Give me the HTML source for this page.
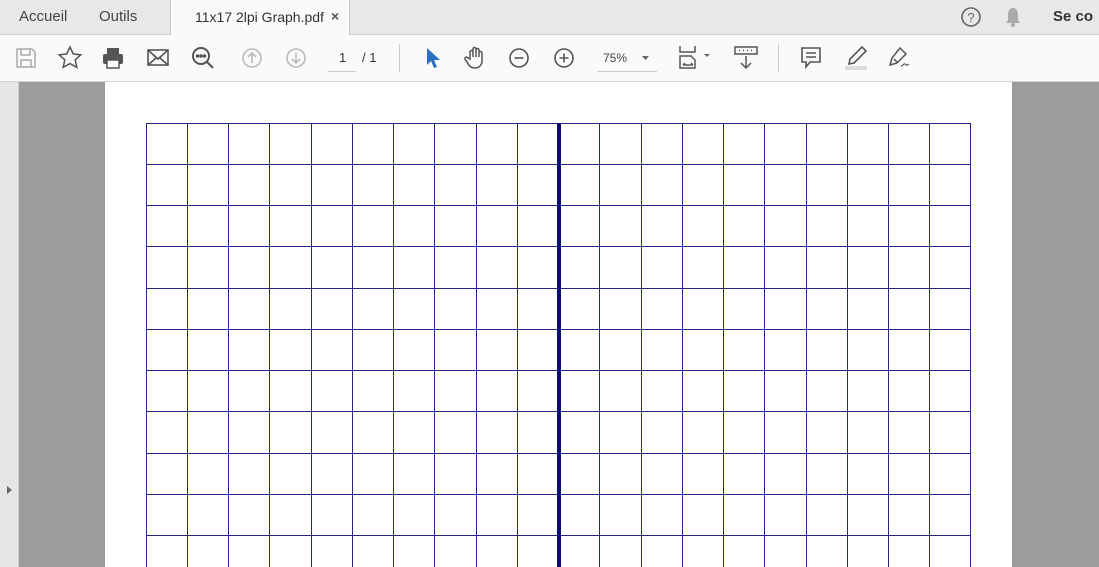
<!DOCTYPE html>
<html><head><meta charset="utf-8"><style>
*{margin:0;padding:0;box-sizing:border-box}
body{width:1099px;height:567px;overflow:hidden;background:#fff;font-family:"Liberation Sans",sans-serif;position:relative}
.tabs{position:absolute;left:0;top:0;width:1099px;height:35px;background:#e8e8e8;border-bottom:1px solid #d0d0d0}
.t{position:absolute;top:8px;font-size:15px;color:#444}
.active{position:absolute;left:170px;top:0;width:180px;height:35px;background:#fafafa;border-left:1px solid #ccc;border-right:1px solid #ccc}
.tb{position:absolute;left:0;top:35px;width:1099px;height:47px;background:#fafafa;border-bottom:1px solid #d4d4d4}
.ic{position:absolute}
</style></head><body>
<div class="tabs">
<span class="t" style="left:19px">Accueil</span>
<span class="t" style="left:99px">Outils</span>
<div class="active"></div>
<span class="t" style="left:195px;color:#333;font-size:14px;top:9px">11x17 2lpi Graph.pdf</span>
<span class="t" style="left:331px;top:8px;font-size:14px;color:#555;font-weight:bold">×</span>
<svg class="ic" style="left:960px;top:6px" width="22" height="22"><circle cx="11" cy="11" r="9" fill="none" stroke="#666" stroke-width="1.6"/><text x="11" y="16" font-size="13" text-anchor="middle" fill="#666" font-family="Liberation Sans">?</text></svg>
<svg class="ic" style="left:1003px;top:6px" width="20" height="22"><path d="M10 2c-4 0-5 4-5 8v4l-2 3h14l-2-3v-4c0-4-1-8-5-8z" fill="#aaa"/><circle cx="10" cy="19" r="2" fill="#aaa"/></svg>
<span class="t" style="left:1053px;font-weight:bold;color:#333">Se co</span>
</div>
<div class="tb">
<svg class="ic" style="left:14px;top:11px" width="24" height="24" fill="none" stroke="#aaa" stroke-width="1.5"><path d="M3 3h15l3 3v15H3z"/><path d="M7 3v6h9V3M7 21v-7h10v7"/></svg>
<svg class="ic" style="left:57px;top:10px" width="26" height="26" fill="none" stroke="#555" stroke-width="1.5"><path d="M13 2l3.3 7 7.5.8-5.6 5 1.6 7.5L13 18.6 6.2 22.3l1.6-7.5-5.6-5 7.5-.8z"/></svg>
<svg class="ic" style="left:101px;top:11px" width="24" height="24"><rect x="6" y="2" width="12" height="6" fill="#555"/><rect x="2" y="8" width="20" height="10" rx="2" fill="#555"/><rect x="6" y="14" width="12" height="8" fill="#fff" stroke="#555" stroke-width="1.5"/></svg>
<svg class="ic" style="left:146px;top:12px" width="24" height="22" fill="none" stroke="#555" stroke-width="1.6"><rect x="2" y="3" width="20" height="15"/><path d="M2 3l10 9 10-9M2 18l8-7M22 18l-8-7"/></svg>
<svg class="ic" style="left:190px;top:10px" width="26" height="26" fill="none" stroke="#555" stroke-width="2"><circle cx="11" cy="11" r="8"/><path d="M17 17l6 6"/><circle cx="7.5" cy="11" r=".8" fill="#555"/><circle cx="11" cy="11" r=".8" fill="#555"/><circle cx="14.5" cy="11" r=".8" fill="#555"/></svg>
<svg class="ic" style="left:241px;top:12px" width="22" height="22" fill="none" stroke="#bbb" stroke-width="1.6"><circle cx="11" cy="11" r="9"/><path d="M11 16V6M7 10l4-4 4 4"/></svg>
<svg class="ic" style="left:285px;top:12px" width="22" height="22" fill="none" stroke="#bbb" stroke-width="1.6"><circle cx="11" cy="11" r="9"/><path d="M11 6v10M7 12l4 4 4-4"/></svg>
<span class="t" style="left:339px;top:15px;font-size:13px;color:#333">1</span>
<div class="ic" style="left:328px;top:36px;width:28px;height:1px;background:#ccc"></div>
<span class="t" style="left:362px;top:15px;font-size:13px;color:#333">/ 1</span>
<div class="ic" style="left:399px;top:9px;width:1px;height:28px;background:#ccc"></div>
<svg class="ic" style="left:424px;top:11px" width="18" height="24"><path d="M3 2v17l4-4 3 7 3-1-3-7h6z" fill="#2d6fc4"/></svg>
<svg class="ic" style="left:463px;top:10px" width="26" height="26" fill="none" stroke="#555" stroke-width="1.5"><path d="M7 14V7a1.5 1.5 0 013 0v5V4a1.5 1.5 0 013 0v8V5a1.5 1.5 0 013 0v7V8a1.5 1.5 0 013 0v8c0 4-3 7-7 7s-6-2-8-6l-2-3a1.5 1.5 0 012.5-1.5z"/></svg>
<svg class="ic" style="left:508px;top:12px" width="22" height="22" fill="none" stroke="#555" stroke-width="1.6"><circle cx="11" cy="11" r="9"/><path d="M6.5 11h9"/></svg>
<svg class="ic" style="left:553px;top:12px" width="22" height="22" fill="none" stroke="#555" stroke-width="1.6"><circle cx="11" cy="11" r="9"/><path d="M6.5 11h9M11 6.5v9"/></svg>
<span class="t" style="left:603px;top:16px;font-size:12px;color:#444">75%</span>
<svg class="ic" style="left:641px;top:20px" width="10" height="6"><path d="M1 1h7l-3.5 4z" fill="#666"/></svg>
<div class="ic" style="left:597px;top:36px;width:60px;height:1px;background:#ccc"></div>
<svg class="ic" style="left:678px;top:9px" width="36" height="28" fill="none" stroke="#555" stroke-width="1.5"><path d="M2 2v6h15V2M2 24V12h11l4 4v8z"/><path d="M5 21h10M5 21l2-2M15 21l-2-2"/><path d="M26 10h6l-3 3z" fill="#666" stroke="none"/></svg>
<svg class="ic" style="left:733px;top:10px" width="26" height="26" fill="none" stroke="#555" stroke-width="1.5"><rect x="2" y="2" width="22" height="7"/><path d="M6 5.5h1M10 5.5h1M14 5.5h1M18 5.5h1M13 11v12M8 18l5 5 5-5"/></svg>
<div class="ic" style="left:778px;top:9px;width:1px;height:28px;background:#ccc"></div>
<svg class="ic" style="left:799px;top:10px" width="24" height="26" fill="none" stroke="#555" stroke-width="1.6"><path d="M3 3h18v14H11l-4 5v-5H3z"/><path d="M7 8h10M7 12h10"/></svg>
<svg class="ic" style="left:842px;top:9px" width="28" height="28"><path d="M20 3l4 4-12 12-5 1 1-5z" fill="none" stroke="#555" stroke-width="1.6"/><rect x="3" y="22" width="22" height="4" fill="#ddd"/></svg>
<svg class="ic" style="left:885px;top:9px" width="28" height="28" fill="none" stroke="#555" stroke-width="1.5"><path d="M15 4l6 6-9 9-7 2 2-7zM9 15l3 3"/><path d="M16 22c2 0 3-3 4-2s2 2 4 0" stroke-width="1.2"/></svg>
</div>
<div class="ic" style="left:0;top:82px;width:19px;height:485px;background:#e6e6e6;border-right:1px solid #d0d0d0"></div>
<svg class="ic" style="left:6px;top:485px" width="8" height="10"><path d="M1 1l5 4-5 4z" fill="#666"/></svg>
<div class="ic" style="left:19px;top:82px;width:86px;height:485px;background:#9c9c9c"></div>
<div class="ic" style="left:1012px;top:82px;width:87px;height:485px;background:#9c9c9c"></div>
<svg class="ic" style="left:105px;top:82px" width="907" height="485">
<g stroke="#26268a" stroke-width="1">
<line x1="41" y1="41.5" x2="866" y2="41.5"/><line x1="41" y1="82.5" x2="866" y2="82.5"/><line x1="41" y1="123.5" x2="866" y2="123.5"/><line x1="41" y1="164.5" x2="866" y2="164.5"/><line x1="41" y1="206.5" x2="866" y2="206.5"/><line x1="41" y1="247.5" x2="866" y2="247.5"/><line x1="41" y1="288.5" x2="866" y2="288.5"/><line x1="41" y1="329.5" x2="866" y2="329.5"/><line x1="41" y1="371.5" x2="866" y2="371.5"/><line x1="41" y1="412.5" x2="866" y2="412.5"/><line x1="41" y1="453.5" x2="866" y2="453.5"/>
<line x1="41.5" y1="41" x2="41.5" y2="485"/><line x1="82.5" y1="41" x2="82.5" y2="485"/><line x1="123.5" y1="41" x2="123.5" y2="485"/><line x1="164.5" y1="41" x2="164.5" y2="485"/><line x1="206.5" y1="41" x2="206.5" y2="485"/><line x1="247.5" y1="41" x2="247.5" y2="485"/><line x1="288.5" y1="41" x2="288.5" y2="485"/><line x1="329.5" y1="41" x2="329.5" y2="485"/><line x1="371.5" y1="41" x2="371.5" y2="485"/><line x1="412.5" y1="41" x2="412.5" y2="485"/>
<line x1="494.5" y1="41" x2="494.5" y2="485"/><line x1="536.5" y1="41" x2="536.5" y2="485"/><line x1="577.5" y1="41" x2="577.5" y2="485"/><line x1="618.5" y1="41" x2="618.5" y2="485"/><line x1="659.5" y1="41" x2="659.5" y2="485"/><line x1="701.5" y1="41" x2="701.5" y2="485"/><line x1="742.5" y1="41" x2="742.5" y2="485"/><line x1="783.5" y1="41" x2="783.5" y2="485"/><line x1="824.5" y1="41" x2="824.5" y2="485"/><line x1="865.5" y1="41" x2="865.5" y2="485"/>
</g>
<rect x="452" y="41" width="4" height="444" fill="#0a0a7a"/>
</svg>
</body></html>
